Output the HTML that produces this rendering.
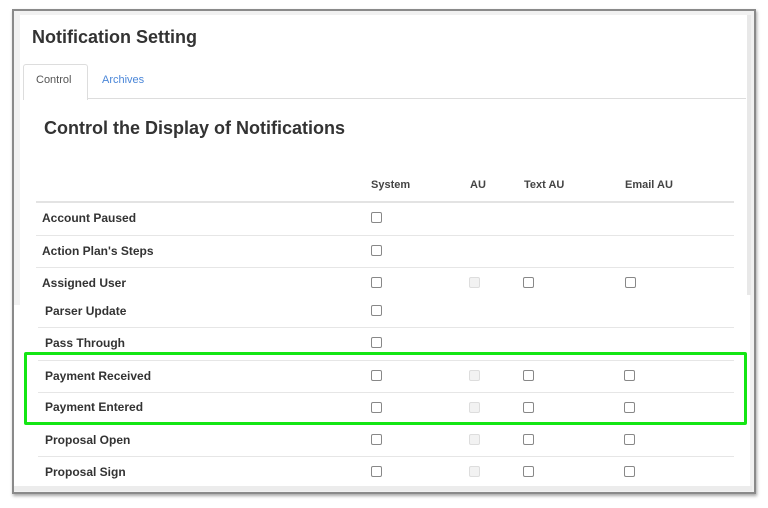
<!DOCTYPE html>
<html><head><style>
body{margin:0;width:768px;height:508px;background:#fff;position:relative;overflow:hidden;font-family:"Liberation Sans",Arial,sans-serif;color:#333}
.a{position:absolute}
.frame{left:12px;top:9px;width:740px;height:481px;border:2px solid #8a8a8a;box-shadow:1px 2px 3px rgba(0,0,0,.35);background:#f1f1f1}
.inner{left:20px;top:15px;width:730px;height:471px;background:#fff}
.lbl{font-size:12px;font-weight:bold;color:#333}
.hd{font-size:11px;font-weight:bold;color:#444}
.line{height:1px;background:#e6e6e6}
.cb{width:9px;height:9px;border:1px solid #888;border-radius:2px;background:#fff}
.cd{width:9px;height:9px;border:1px solid #ddd;border-radius:2px;background:#f2f2f2}
</style></head><body>
<div class="a frame"></div>
<div class="a inner"></div>
<div class="a" style="left:14px;top:305px;width:8px;height:181px;background:#fff"></div>
<div class="a" style="left:747px;top:15px;width:4px;height:280px;background:#e8e8e8"></div>
<div class="a" style="left:14px;top:486px;width:738px;height:5px;background:#ececec"></div>

<div class="a" style="left:32px;top:27px;font-size:18px;font-weight:bold;color:#333">Notification Setting</div>

<div class="a" style="left:24px;top:98px;width:722px;height:1px;background:#ddd"></div>
<div class="a" style="left:23px;top:64px;width:63px;height:35px;border:1px solid #ddd;border-bottom:none;border-radius:3px 3px 0 0;background:#fff"></div>
<div class="a" style="left:36px;top:74px;font-size:11px;color:#555">Control</div>
<div class="a" style="left:102px;top:74px;font-size:11px;color:#4a86d8">Archives</div>

<div class="a" style="left:44px;top:118px;font-size:18px;font-weight:bold;color:#333">Control the Display of Notifications</div>

<div class="a hd" style="left:371px;top:179px">System</div>
<div class="a hd" style="left:470px;top:179px">AU</div>
<div class="a hd" style="left:524px;top:179px">Text AU</div>
<div class="a hd" style="left:625px;top:179px">Email AU</div>
<div class="a" style="left:36px;top:201px;width:698px;height:2px;background:#e3e3e3"></div>

<div class="a lbl" style="left:42px;top:211px">Account Paused</div>
<div class="a cb" style="left:371px;top:212px"></div>
<div class="a line" style="left:36px;top:235px;width:698px"></div>

<div class="a lbl" style="left:42px;top:244px">Action Plan's Steps</div>
<div class="a cb" style="left:371px;top:245px"></div>
<div class="a line" style="left:36px;top:267px;width:698px"></div>

<div class="a lbl" style="left:42px;top:276px">Assigned User</div>
<div class="a cb" style="left:371px;top:277px"></div>
<div class="a cd" style="left:469px;top:277px"></div>
<div class="a cb" style="left:523px;top:277px"></div>
<div class="a cb" style="left:625px;top:277px"></div>

<div class="a lbl" style="left:45px;top:304px">Parser Update</div>
<div class="a cb" style="left:371px;top:305px"></div>
<div class="a line" style="left:38px;top:327px;width:696px"></div>

<div class="a lbl" style="left:45px;top:336px">Pass Through</div>
<div class="a cb" style="left:371px;top:337px"></div>
<div class="a line" style="left:38px;top:360px;width:696px"></div>

<div class="a lbl" style="left:45px;top:369px">Payment Received</div>
<div class="a cb" style="left:371px;top:370px"></div>
<div class="a cd" style="left:469px;top:370px"></div>
<div class="a cb" style="left:523px;top:370px"></div>
<div class="a cb" style="left:624px;top:370px"></div>
<div class="a line" style="left:38px;top:392px;width:696px"></div>

<div class="a lbl" style="left:45px;top:400px">Payment Entered</div>
<div class="a cb" style="left:371px;top:402px"></div>
<div class="a cd" style="left:469px;top:402px"></div>
<div class="a cb" style="left:523px;top:402px"></div>
<div class="a cb" style="left:624px;top:402px"></div>

<div class="a lbl" style="left:45px;top:433px">Proposal Open</div>
<div class="a cb" style="left:371px;top:434px"></div>
<div class="a cd" style="left:469px;top:434px"></div>
<div class="a cb" style="left:523px;top:434px"></div>
<div class="a cb" style="left:624px;top:434px"></div>
<div class="a line" style="left:38px;top:456px;width:696px"></div>

<div class="a lbl" style="left:45px;top:465px">Proposal Sign</div>
<div class="a cb" style="left:371px;top:466px"></div>
<div class="a cd" style="left:469px;top:466px"></div>
<div class="a cb" style="left:523px;top:466px"></div>
<div class="a cb" style="left:624px;top:466px"></div>

<div class="a" style="left:24px;top:352px;width:717px;height:67px;border:3px solid #14e614;border-radius:2px"></div>
</body></html>
